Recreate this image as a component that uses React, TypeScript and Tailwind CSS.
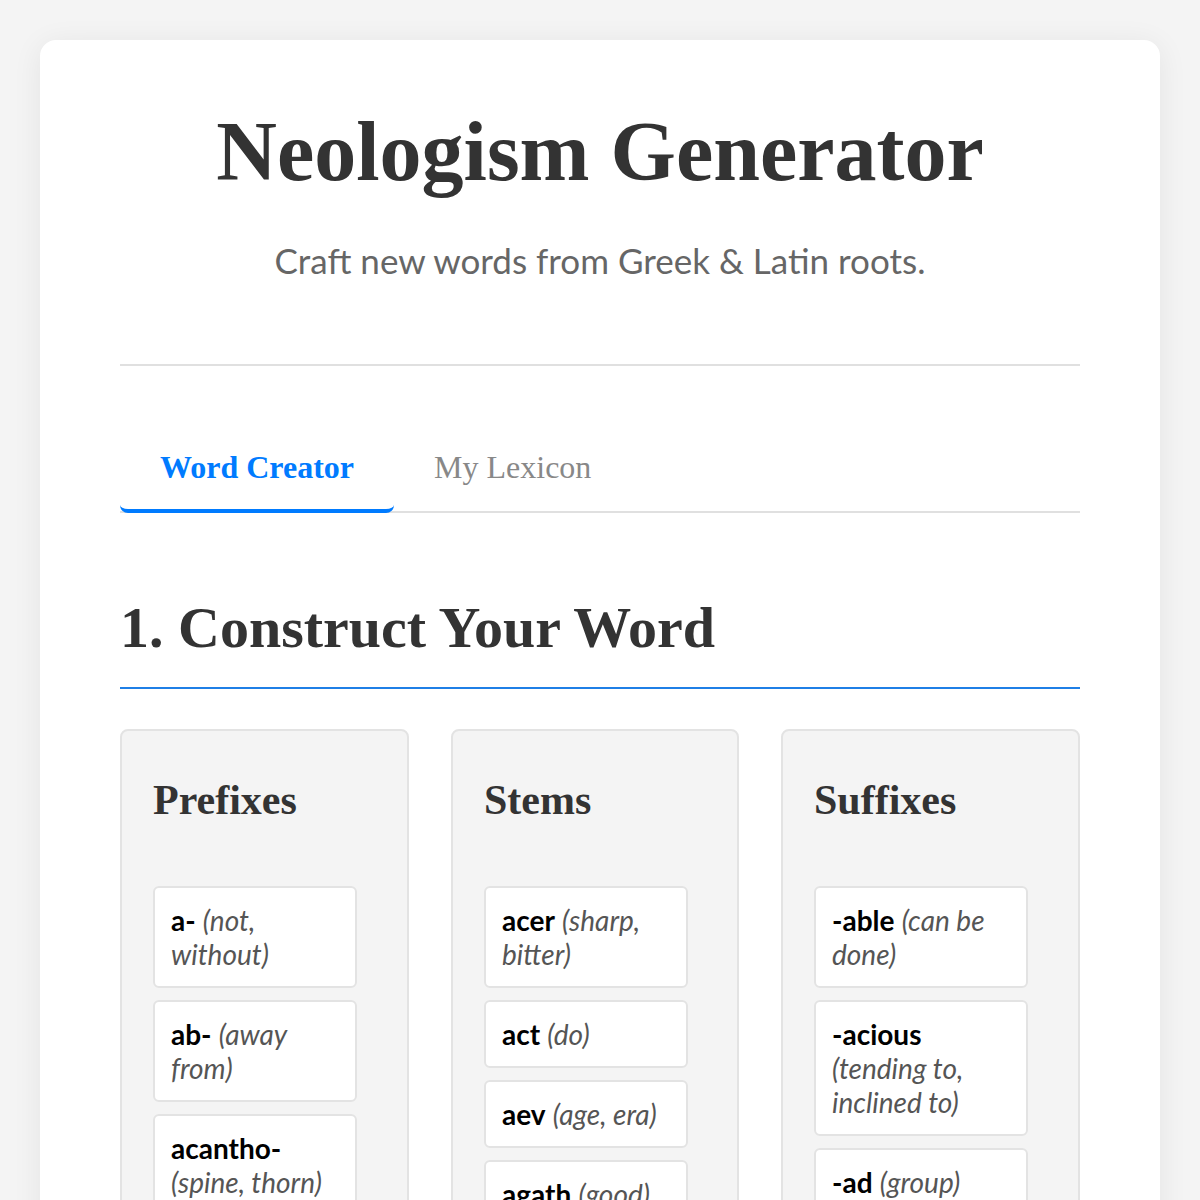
const serif = "font-['Liberation_Serif','DejaVu_Serif',serif]";

type Root = { term: string; meaning: string };

const prefixes: Root[] = [
  { term: "a-", meaning: "(not, without)" },
  { term: "ab-", meaning: "(away from)" },
  { term: "acantho-", meaning: "(spine, thorn)" },
  { term: "acro-", meaning: "(high, top)" },
  { term: "ad-", meaning: "(to, toward)" },
];

const stems: Root[] = [
  { term: "acer", meaning: "(sharp, bitter)" },
  { term: "act", meaning: "(do)" },
  { term: "aev", meaning: "(age, era)" },
  { term: "agath", meaning: "(good)" },
  { term: "agog", meaning: "(leader)" },
];

const suffixes: Root[] = [
  { term: "-able", meaning: "(can be done)" },
  { term: "-acious", meaning: "(tending to, inclined to)" },
  { term: "-ad", meaning: "(group)" },
  { term: "-age", meaning: "(action, state)" },
];

function RootColumn({ title, items, cardWidth }: { title: string; items: Root[]; cardWidth: string }) {
  return (
    <div className="bg-[#f4f4f4] border-2 border-[#e3e3e3] rounded-lg pt-[48px] px-[31px] pb-8">
      <h3 className={`${serif} text-[42px] leading-none font-bold text-[#333]`}>{title}</h3>
      <div className="mt-[65px] flex flex-col gap-3">
        {items.map((it) => (
          <div
            key={it.term}
            className={`${cardWidth} bg-white border-2 border-[#e3e3e3] rounded-md px-4 py-[15px] text-[28px] leading-[34px]`}
          >
            <span className="font-bold text-black">{it.term}</span>{" "}
            <span className="italic text-[#555]">{it.meaning}</span>
          </div>
        ))}
      </div>
    </div>
  );
}

export default function App() {
  return (
    <div className="min-h-screen bg-[#f4f4f4] px-10 pt-10 font-['Lato',sans-serif]">
      <div className="bg-white rounded-2xl shadow-[0_4px_30px_rgba(0,0,0,0.07)] px-20 pt-[70px] pb-20">
        <header className="text-center pb-[83px] border-b-2 border-[#e0e0e0]">
          <h1 className={`${serif} text-[84px] leading-none font-bold text-[#333]`}>Neologism Generator</h1>
          <p className="mt-[45px] text-[35px] leading-[1.2] text-[#666]">Craft new words from Greek &amp; Latin roots.</p>
        </header>

        <nav className="mt-[59px] flex border-b-2 border-[#e0e0e0]">
          <button className={`${serif} -mb-[2px] px-10 pt-[26px] pb-[26px] text-[32px] leading-none font-bold text-[#007bff] border-b-4 border-[#007bff] rounded-b-lg`}>
            Word Creator
          </button>
          <button className={`${serif} -mb-[2px] px-10 pt-[26px] pb-[26px] text-[32px] leading-none text-[#888] border-b-4 border-transparent`}>
            My Lexicon
          </button>
        </nav>

        <section className="mt-[86px]">
          <h2 className={`${serif} text-[58px] leading-none font-bold text-[#333] pb-[30px] border-b-2 border-[#1f7fe6]`}>
            1. Construct Your Word
          </h2>
          <div className="mt-[40px] grid grid-cols-[289px_288px_1fr] gap-[42px] items-start">
            <RootColumn title="Prefixes" items={prefixes} cardWidth="w-[204px]" />
            <RootColumn title="Stems" items={stems} cardWidth="w-[204px]" />
            <RootColumn title="Suffixes" items={suffixes} cardWidth="w-[214px]" />
          </div>
        </section>
      </div>
    </div>
  );
}
